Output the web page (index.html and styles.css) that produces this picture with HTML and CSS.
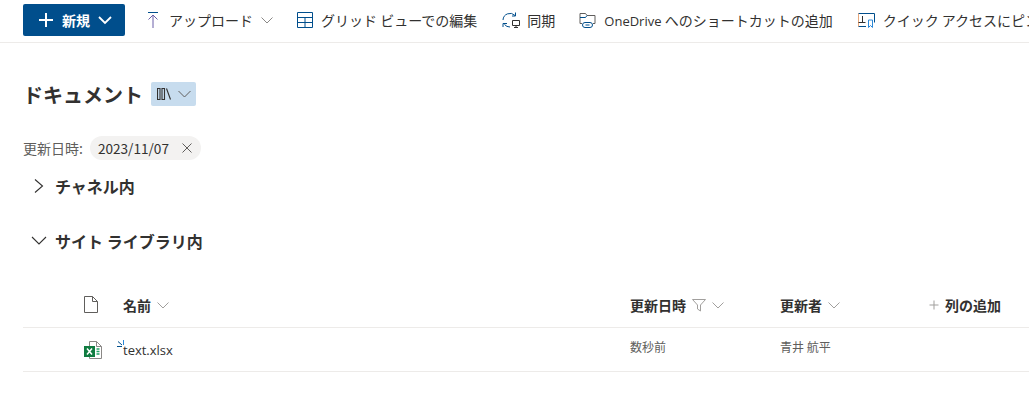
FILE: index.html
```html
<!DOCTYPE html>
<html lang="ja">
<head>
<meta charset="utf-8">
<title>ドキュメント</title>
<link rel="stylesheet" href="styles.css">
</head>
<body>
<div class="commandbar">
    <button class="new-btn">
        <svg width="16" height="16" viewBox="0 0 16 16"><path d="M8 1v14M1 8h14" stroke="#fff" stroke-width="2" fill="none"/></svg>
        <span>新規</span>
        <svg width="14" height="14" viewBox="0 0 14 14"><path d="M1 4l6 6 6-6" stroke="#fff" stroke-width="1.800" fill="none"/></svg>
    </button>
    <div class="cmd cmd-upload">
        <svg width="12" height="16" viewBox="0 0 12 16"><path d="M1 .5h10" stroke="#004e8c" fill="none"/><path d="M6 16V3M1.500 7.500 6 3l4.500 4.500" stroke="#6b5fa8" fill="none"/></svg>
        <span>アップロード</span>
        <svg class="chev" width="12" height="12" viewBox="0 0 12 12"><path d="M.5 3.500 6 9l5.500-5.500" stroke="#8a8886" fill="none"/></svg>
    </div>
    <div class="cmd cmd-grid">
        <svg width="16" height="16" viewBox="0 0 16 16"><path d="M.5.500h15v15H.5zM.5 5.500h15M.5 10.500h15M8 5.500v10" stroke="#004e8c" fill="none"/></svg>
        <span>グリッド ビューでの編集</span>
    </div>
    <div class="cmd cmd-sync">
        <svg width="18" height="16" viewBox="0 0 18 16"><path d="M1 8A7 7 0 0 1 13 3.500M13.500 .5v3.500H10" stroke="#004e8c" fill="none"/><path d="M8 15A7 7 0 0 1 2.500 12.500M1 15v-3.500h4" stroke="#004e8c" fill="none"/><path d="M10.500 8.500h7v5h-7zM14 13.500v2M12 15.500h4" stroke="#323130" fill="none"/></svg>
        <span>同期</span>
    </div>
    <div class="cmd cmd-shortcut">
        <svg width="17" height="16" viewBox="0 0 17 16"><path d="M3 11.500H1V1.500h5.500L8 3.500h8v8h-2" stroke="#605e5c" fill="none"/><path d="M1 5.500h5.500L8 3.500" stroke="#004e8c" fill="none"/><rect x="3.500" y="10.500" width="10" height="5" rx="2.500" stroke="#004e8c" fill="none"/><path d="M6.500 13h4" stroke="#004e8c" fill="none"/></svg>
        <span><span class="latin">OneDrive</span> へのショートカットの追加</span>
    </div>
    <div class="cmd cmd-pin">
        <svg width="17" height="16" viewBox="0 0 17 16"><path d="M8 14.500H.5v-13h16v9" stroke="#004e8c" fill="none"/><path d="M.5 1.500v13" stroke="#e8a87c" fill="none"/><path d="M4.500 4v6.500M.5 10.500h7" stroke="#323130" fill="none"/><path d="M10.500 8v7.500l2-2 2 2V8z" stroke="#2b88d8" fill="none"/></svg>
        <span>クイック アクセスにピン留めする</span>
    </div>
</div>

<main class="content">
    <div class="title-row">
        <h1>ドキュメント</h1>
        <div class="view-switch">
            <svg width="15" height="12" viewBox="0 0 15 12"><path d="M.5.500h2.500v11H.5zM5 .500h2.500v11H5zM9.500.500l4 11" stroke="#323130" stroke-width="1.100" fill="none"/></svg>
            <svg width="13" height="12" viewBox="0 0 13 12"><path d="M.5 3 6.500 9l6-6" stroke="#605e5c" fill="none"/></svg>
        </div>
    </div>

    <div class="filter-row">
        <span class="filter-label">更新日時:</span>
        <span class="pill">
            2023/11/07
            <svg width="10" height="10" viewBox="0 0 10 10"><path d="M.5.500l9 9M9.500.500l-9 9" stroke="#605e5c" fill="none"/></svg>
        </span>
    </div>

    <div class="group group-closed">
        <svg width="12" height="16" viewBox="0 0 12 16"><path d="M2 1.500 9.500 8 2 14.500" stroke="#323130" stroke-width="1.100" fill="none"/></svg>
        <h2>チャネル内</h2>
    </div>
    <div class="group group-open">
        <svg width="16" height="12" viewBox="0 0 16 12"><path d="M1 2l7 7 7-7" stroke="#323130" stroke-width="1.100" fill="none"/></svg>
        <h2>サイト ライブラリ内</h2>
    </div>

    <div class="list">
        <div class="list-row list-head">
            <div class="col col-icon">
                <svg width="14" height="17" viewBox="0 0 14 17"><path d="M.5.500h8l5 5v11H.5zM8.500.500v5h5" stroke="#605e5c" fill="none"/></svg>
            </div>
            <div class="col col-name">名前 <svg width="12" height="12" viewBox="0 0 12 12"><path d="M.5 3.500 6 9l5.500-5.500" stroke="#a19f9d" fill="none"/></svg></div>
            <div class="col col-date">更新日時
                <svg width="14" height="14" viewBox="0 0 14 14"><path d="M.5 1.500h13L8.500 7v6l-3-2V7z" stroke="#a19f9d" fill="none"/></svg>
                <svg width="12" height="12" viewBox="0 0 12 12"><path d="M.5 3.500 6 9l5.500-5.500" stroke="#a19f9d" fill="none"/></svg>
            </div>
            <div class="col col-author">更新者 <svg width="12" height="12" viewBox="0 0 12 12"><path d="M.5 3.500 6 9l5.500-5.500" stroke="#a19f9d" fill="none"/></svg></div>
            <div class="col col-add">
                <svg width="10" height="10" viewBox="0 0 10 10"><path d="M5 .500v9M.5 5h9" stroke="#a19f9d" fill="none"/></svg>
                列の追加
            </div>
        </div>
        <div class="list-row list-item">
            <div class="col col-icon">
                <svg width="18" height="18" viewBox="0 0 18 18">
                    <path d="M5.500.500h7l5 5v12h-12z" fill="#fff" stroke="#8a8886"/>
                    <path d="M12.500.500v5h5" fill="none" stroke="#8a8886"/>
                    <path d="M12.500 8h3M12.500 10.500h3M12.500 13h3" stroke="#21a366" stroke-width="1.500" fill="none"/>
                    <rect x="0" y="5" width="11" height="11" fill="#107c41"/>
                    <path d="M3 7.500 8 13.500M8 7.500 3 13.500" stroke="#fff" stroke-width="1.500" fill="none"/>
                </svg>
            </div>
            <div class="col col-name">
                <span class="file-name">text.xlsx</span>
                <svg class="new-mark" width="7" height="7" viewBox="0 0 7 7"><path d="M0 6.500h5M1 1.500 5 5" stroke="#004e8c" fill="none"/><path d="M6.500 0v5" stroke="#2b88d8" fill="none"/></svg>
            </div>
            <div class="col col-date col-small">数秒前</div>
            <div class="col col-author col-small">青井 航平</div>
        </div>
    </div>
</main>
</body>
</html>
```

FILE: styles.css
```css
html, body {
    height: 100%;
}
body {
    margin: 0;
    overflow: hidden;
    background: #fff;
    color: #323130;
    font-family: 'Noto Sans CJK JP', 'Noto Sans', sans-serif;
    font-size: 14px;
}
svg {
    display: block;
    flex: none;
}
.commandbar {
    display: flex;
    align-items: center;
    height: 40px;
    padding: 0 0 2px 23px;
    border-bottom: 1px solid #edebe9;
    white-space: nowrap;
    overflow: hidden;
}
.new-btn {
    display: flex;
    flex: none;
    align-items: center;
    gap: 8px;
    width: 102px;
    height: 32px;
    padding: 0 0 0 15px;
    border: 0;
    border-radius: 2px;
    background: #004e8c;
    color: #fff;
    font: inherit;
    font-weight: 700;
}
.cmd {
    display: flex;
    align-items: center;
    gap: 8px;
    flex: none;
}
.cmd-upload {
    margin-left: 22px;
    gap: 10px;
}
.cmd-upload .chev {
    margin-left: -2px;
}
.cmd-grid {
    margin-left: 24px;
}
.cmd-sync {
    margin-left: 25px;
    gap: 7px;
}
.cmd-shortcut {
    margin-left: 24px;
}
.cmd-pin {
    margin-left: 25px;
}
.latin {
    font-family: 'Open Sans', 'Noto Sans', sans-serif;
    font-size: 13px;
}
.content {
    padding-left: 23px;
}
.title-row {
    display: flex;
    align-items: center;
    gap: 8px;
    margin-top: 39px;
    height: 24px;
}
h1 {
    margin: 0;
    font-size: 20px;
    font-weight: 700;
    color: #323130;
}
.view-switch {
    display: flex;
    align-items: center;
    justify-content: center;
    gap: 6px;
    width: 45px;
    height: 24px;
    border-radius: 2px;
    background: #c7dcee;
}
.filter-row {
    display: flex;
    align-items: center;
    gap: 7px;
    margin-top: 30px;
    height: 24px;
}
.filter-label {
    color: #605e5c;
}
.pill {
    display: flex;
    align-items: center;
    gap: 13px;
    height: 24px;
    padding: 0 9px 0 8px;
    border-radius: 12px;
    background: #f3f2f1;
    font-size: 13.6px;
}
.group {
    display: flex;
    align-items: center;
    height: 24px;
}
.group h2 {
    margin: 0;
    font-size: 16px;
    font-weight: 700;
}
.group-closed {
    margin-top: 14px;
    padding-left: 10px;
    gap: 10px;
}
.group-open {
    margin-top: 31px;
    padding-left: 8px;
    gap: 8px;
}
.list {
    margin-top: 27px;
}
.list-row {
    display: flex;
    align-items: center;
    border-bottom: 1px solid #edebe9;
}
.list-head {
    height: 45px;
    padding-top: 2px;
    font-weight: 700;
}
.list-item {
    height: 43px;
    position: relative;
    color: #605e5c;
}
.col {
    display: flex;
    align-items: center;
    flex: none;
}
.col-icon {
    width: 100px;
    padding-left: 61px;
    box-sizing: border-box;
}
.col-name {
    width: 507px;
    gap: 6px;
    position: relative;
}
.col-date {
    width: 150px;
    gap: 6px;
}
.col-author {
    width: 149px;
    gap: 6px;
}
.col-add {
    gap: 6px;
}
.col-small {
    font-size: 12px;
    margin-top: -6px;
}
.file-name {
    color: #323130;
    font-family: 'Open Sans', 'Noto Sans', sans-serif;
    font-size: 13px;
}
.new-mark {
    position: absolute;
    left: -6px;
    top: -1px;
}
```
